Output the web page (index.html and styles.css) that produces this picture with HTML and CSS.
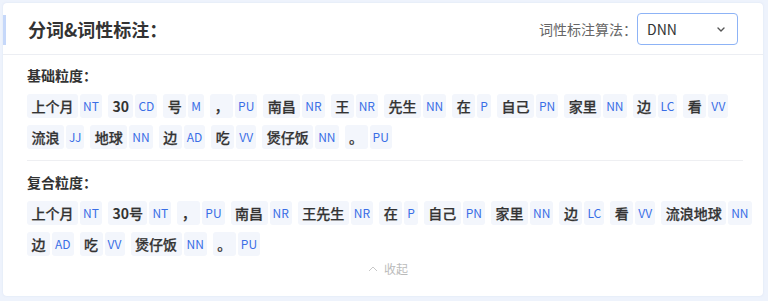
FILE: index.html
```html
<!DOCTYPE html>
<html lang="zh-CN">
<head>
<meta charset="utf-8">
<title>分词&amp;词性标注</title>
<link rel="stylesheet" href="styles.css">
</head>
<body>
<div class="card">
  <div class="card-header">
    <span class="accent"></span>
    <h2 class="title">分词&amp;词性标注：</h2>
    <div class="algo">
      <span class="algo-label">词性标注算法：</span>
      <div class="select">
        <span class="select-value">DNN</span>
        <svg class="select-arrow" width="8" height="5" viewBox="0 0 8 5"><path d="M1 1 L4 4 L7 1" fill="none" stroke="#555" stroke-width="1.4" stroke-linecap="round" stroke-linejoin="round"/></svg>
      </div>
    </div>
  </div>
  <div class="card-body">
    <div class="section section-basic">
      <div class="section-label">基础粒度：</div>
      <div class="tokens">
        <span class="token"><span class="word">上个月</span><span class="pos">NT</span></span>
        <span class="token"><span class="word num">30</span><span class="pos">CD</span></span>
        <span class="token"><span class="word">号</span><span class="pos">M</span></span>
        <span class="token"><span class="word">，</span><span class="pos">PU</span></span>
        <span class="token"><span class="word">南昌</span><span class="pos">NR</span></span>
        <span class="token"><span class="word">王</span><span class="pos">NR</span></span>
        <span class="token"><span class="word">先生</span><span class="pos">NN</span></span>
        <span class="token"><span class="word">在</span><span class="pos">P</span></span>
        <span class="token"><span class="word">自己</span><span class="pos">PN</span></span>
        <span class="token"><span class="word">家里</span><span class="pos">NN</span></span>
        <span class="token"><span class="word">边</span><span class="pos">LC</span></span>
        <span class="token"><span class="word">看</span><span class="pos">VV</span></span>
        <span class="token"><span class="word">流浪</span><span class="pos">JJ</span></span>
        <span class="token"><span class="word">地球</span><span class="pos">NN</span></span>
        <span class="token"><span class="word">边</span><span class="pos">AD</span></span>
        <span class="token"><span class="word">吃</span><span class="pos">VV</span></span>
        <span class="token"><span class="word">煲仔饭</span><span class="pos">NN</span></span>
        <span class="token"><span class="word">。</span><span class="pos">PU</span></span>
      </div>
    </div>
    <div class="section section-compound">
      <div class="section-label">复合粒度：</div>
      <div class="tokens">
        <span class="token"><span class="word">上个月</span><span class="pos">NT</span></span>
        <span class="token"><span class="word"><b class="num">30</b>号</span><span class="pos">NT</span></span>
        <span class="token"><span class="word">，</span><span class="pos">PU</span></span>
        <span class="token"><span class="word">南昌</span><span class="pos">NR</span></span>
        <span class="token"><span class="word">王先生</span><span class="pos">NR</span></span>
        <span class="token"><span class="word">在</span><span class="pos">P</span></span>
        <span class="token"><span class="word">自己</span><span class="pos">PN</span></span>
        <span class="token"><span class="word">家里</span><span class="pos">NN</span></span>
        <span class="token"><span class="word">边</span><span class="pos">LC</span></span>
        <span class="token"><span class="word">看</span><span class="pos">VV</span></span>
        <span class="token"><span class="word">流浪地球</span><span class="pos">NN</span></span>
        <span class="token"><span class="word">边</span><span class="pos">AD</span></span>
        <span class="token"><span class="word">吃</span><span class="pos">VV</span></span>
        <span class="token"><span class="word">煲仔饭</span><span class="pos">NN</span></span>
        <span class="token"><span class="word">。</span><span class="pos">PU</span></span>
      </div>
    </div>
    <div class="collapse">
      <svg class="collapse-icon" width="10" height="6" viewBox="0 0 10 6"><path d="M1 5 L5 1 L9 5" fill="none" stroke="#c8c8c8" stroke-width="1"/></svg>
      <span>收起</span>
    </div>
  </div>
</div>
</body>
</html>
```
FILE: styles.css
```css
* { box-sizing: border-box; }
html, body { margin: 0; padding: 0; }
body {
  background: #eef3fc;
  padding: 3px 5px 5px 3px;
  font-family: "Noto Sans CJK SC", "Noto Sans", sans-serif;
  color: #333;
}
.card {
  width: 760px;
  height: 293px;
  background: #fff;
  border-radius: 4px;
  box-shadow: 0 0 2px rgba(180, 195, 225, 0.35);
  overflow: hidden;
}
.card-header {
  height: 52px;
  border-bottom: 1px solid #eceef3;
  display: flex;
  align-items: center;
  padding-right: 25px;
}
.accent {
  width: 3px;
  height: 30px;
  background: #c6d8fa;
  margin-right: 22px;
  margin-top: 2px;
}
.title {
  margin: 0;
  font-size: 18px;
  font-weight: 700;
  line-height: 24px;
  color: #333;
}
.algo {
  margin-left: auto;
  display: flex;
  align-items: center;
}
.algo-label {
  font-size: 14px;
  color: #666;
  line-height: 20px;
  margin-right: 0;
}
.select {
  width: 101px;
  height: 32px;
  border: 1px solid #8db3f6;
  border-radius: 4px;
  display: flex;
  align-items: center;
  justify-content: space-between;
  padding: 0 12px 0 9px;
}
.select-value {
  font-size: 14px;
  color: #333;
  line-height: 20px;
}
.select-arrow { display: block; margin-top: 2px; }
.card-body {
  padding: 0 4px 0 24px;
}
.section-basic {
  padding: 10px 0 11px;
  border-bottom: 1px solid #eeeff2;
  margin-right: 16px;
}
.section-compound {
  padding-top: 11px;
}
.section-label {
  font-size: 14px;
  font-weight: 700;
  line-height: 20px;
  color: #333;
  margin-bottom: 9px;
}
.tokens {
  display: flex;
  flex-wrap: wrap;
  column-gap: 6px;
  row-gap: 7px;
}
.section-basic .tokens { margin-right: -16px; }
.token {
  display: flex;
  gap: 2px;
  height: 24px;
}
.word, .pos {
  background: #f3f6fc;
  border-radius: 3px;
  display: flex;
  align-items: center;
}
.word {
  padding: 0 4.5px;
  font-size: 14px;
  font-weight: 500;
  color: #333;
  line-height: 24px;
  -webkit-text-stroke: 0.25px #333;
}
.num, .word .num { font-weight: 700; -webkit-text-stroke: 0; }
.pos {
  padding: 0 3px;
  font-size: 12px;
  color: #3a6ee6;
  line-height: 24px;
}
.collapse {
  margin-top: 5px;
  display: flex;
  justify-content: center;
  align-items: center;
  gap: 6px;
  font-size: 12px;
  line-height: 16px;
  color: #bbb;
  padding-right: 10px;
}
.collapse-icon { display: block; }
```
